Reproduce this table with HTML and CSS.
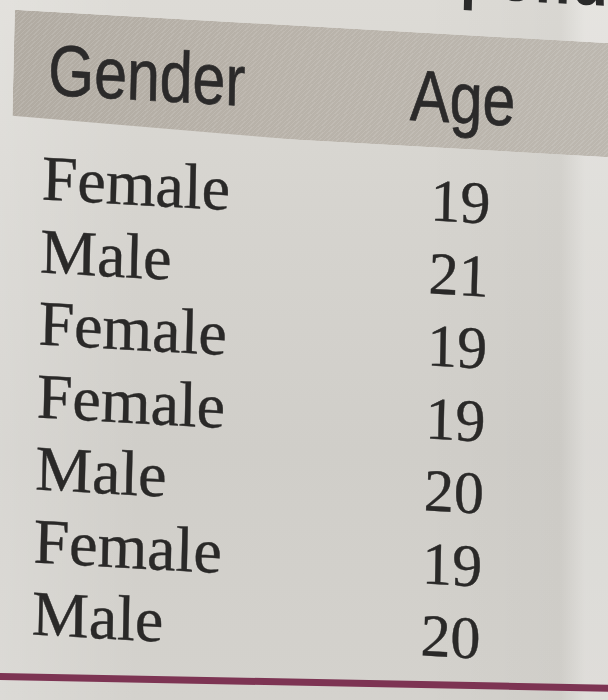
FILE: index.html
```html
<!DOCTYPE html>
<html>
<head>
<meta charset="utf-8">
<link rel="stylesheet" href="styles.css">
</head>
<body>
<div class="page">
  <div class="sheet">
    <div class="title"><div class="title-text">pond</div></div>
    <div class="band">
      <div class="h-gender"><span class="narrow">Gender</span></div>
      <div class="h-age"><span class="narrow">Age</span></div>
    </div>
    <div class="rows">
      <div class="lab">Female</div><div class="num">19</div>
      <div class="lab">Male</div><div class="num">21</div>
      <div class="lab">Female</div><div class="num">19</div>
      <div class="lab">Female</div><div class="num">19</div>
      <div class="lab">Male</div><div class="num">20</div>
      <div class="lab">Female</div><div class="num">19</div>
      <div class="lab">Male</div><div class="num">20</div>
    </div>
  </div>
  <div class="rule"></div>
</div>
</body>
</html>
```

FILE: styles.css
```css
html, body {
  margin: 0;
  padding: 0;
  background: #d6d4cf;
}
.page {
  width: 608px;
  height: 700px;
  overflow: hidden;
  display: flow-root;
  background:
    linear-gradient(90deg, rgba(255,255,255,0.18) 0px, rgba(255,255,255,0) 140px, rgba(0,0,0,0) 420px, rgba(0,0,0,0.02) 560px, rgba(255,255,255,0.25) 585px, rgba(255,255,255,0.25) 608px),
    linear-gradient(180deg, #dddbd6 0px, #d6d4cf 200px, #d0cec9 450px, #d4d2cd 700px);
  filter: blur(0.5px);
}
.sheet {
  height: 673px;
  display: flow-root;
  transform-origin: 0 0;
  transform: skewX(-1.3deg) skewY(3.2deg);
}
.title {
  height: 9px;
  display: flow-root;
}
.title-text {
  margin-top: -76px;
  margin-left: 460px;
  font-family: "Liberation Sans", Arial, sans-serif;
  font-weight: bold;
  font-size: 58px;
  line-height: 56px;
  color: #2a2a2a;
  letter-spacing: 2px;
  white-space: nowrap;
}
.band {
  margin-left: 15px;
  width: 640px;
  height: 114px;
  display: grid;
  grid-template-columns: 385px 130px;
  align-content: start;
  clip-path: polygon(0 0, 100% 0, 100% 100%, 45% 100%, 0 93%);
  background:
    repeating-linear-gradient(135deg, rgba(255,255,255,0.11) 0px, rgba(255,255,255,0.11) 1px, rgba(0,0,0,0) 1px, rgba(0,0,0,0) 3px),
    linear-gradient(90deg, #b1aba2 0px, #b8b2a9 250px, #bdb8b0 640px);
  font-family: "Liberation Sans", Arial, sans-serif;
  font-size: 72px;
  line-height: 72px;
  color: #2b2a2a;
  -webkit-text-stroke: 0.7px #2b2a2a;
}
.narrow {
  display: inline-block;
  transform: scaleX(0.82);
}
.h-gender {
  padding-top: 22px;
  padding-left: 35px;
}
.h-gender .narrow {
  transform-origin: 0 50%;
}
.h-age {
  padding-top: 27px;
  text-align: center;
}
.h-age .narrow {
  transform-origin: 50% 50%;
}
.rows {
  padding-top: 17px;
  display: grid;
  grid-template-columns: 400px 130px;
  grid-auto-rows: 72.5px;
  font-family: "Liberation Serif", "Times New Roman", serif;
  color: #2a2928;
  -webkit-text-stroke: 0.4px #2a2928;
}
.lab {
  padding-left: 46px;
  font-size: 64px;
  line-height: 72.5px;
}
.num {
  font-size: 60px;
  line-height: 72.5px;
  text-align: center;
}
.rule {
  height: 7px;
  background: #7d3453;
  transform: rotate(1.1deg);
  transform-origin: 0 0;
  width: 640px;
}
```
